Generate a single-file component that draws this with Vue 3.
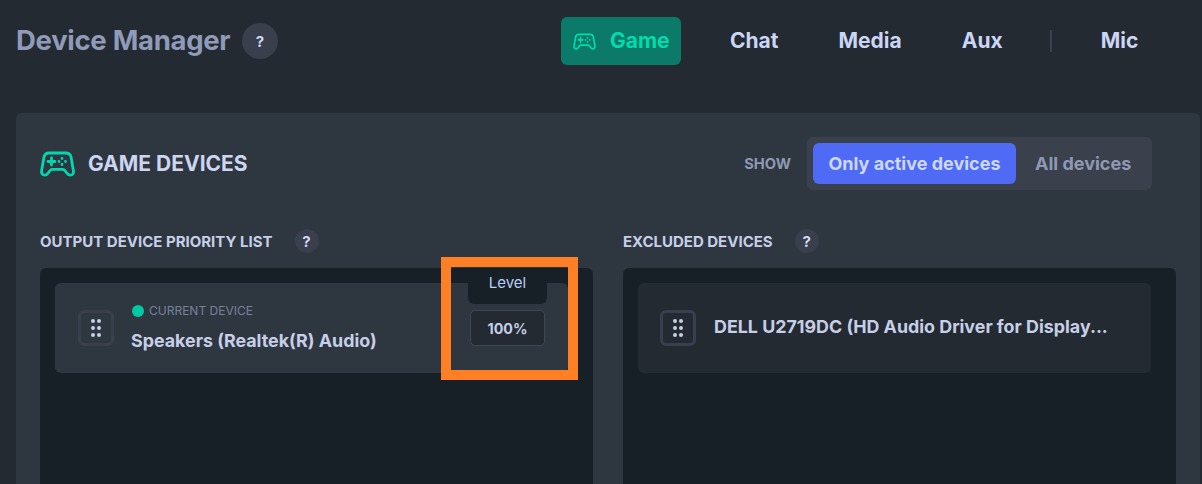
<script setup>
</script>

<template>
  <div class="page">
    <header class="top">
      <h1 class="title">Device Manager</h1>
      <span class="help big">?</span>
      <nav class="tabs">
        <div class="tab active">
          <svg class="pad small" viewBox="0 0 35 26" fill="none" stroke="currentColor" stroke-width="2.6" stroke-linecap="round" stroke-linejoin="round">
            <path d="M9 2h17c2.500 0 4.300 1.400 5 3.800l2.400 14c.4 2.600-1 4.400-3 4.400-1.500 0-2.500-.8-3.500-2.100l-2-2.600c-.6-.8-1.300-1.100-2.200-1.100h-10.400c-.9 0-1.600.3-2.200 1.100l-2 2.600c-1 1.300-2 2.100-3.500 2.100-2 0-3.400-1.800-3-4.400l2.400-14c.7-2.400 2.500-3.800 5-3.800z" />
            <path d="M8 10.500h7M11.500 7v7M22 7.500v.1M25.500 10.500v.1M19 10.500v.1M22 13.500v.1" />
          </svg>
          <span>Game</span>
        </div>
        <div class="tab chat">Chat</div>
        <div class="tab media">Media</div>
        <div class="tab aux">Aux</div>
        <i class="sep"></i>
        <div class="tab mic">Mic</div>
      </nav>
    </header>

    <section class="panel">
      <div class="panel-head">
        <svg class="pad" viewBox="0 0 35 26" fill="none" stroke="currentColor" stroke-width="2.8" stroke-linecap="round" stroke-linejoin="round">
          <path d="M9 2h17c2.500 0 4.300 1.400 5 3.800l2.400 14c.4 2.600-1 4.400-3 4.400-1.500 0-2.500-.8-3.500-2.100l-2-2.600c-.6-.8-1.300-1.100-2.200-1.100h-10.400c-.9 0-1.600.3-2.200 1.100l-2 2.600c-1 1.300-2 2.100-3.500 2.100-2 0-3.400-1.800-3-4.400l2.400-14c.7-2.400 2.500-3.800 5-3.800z" />
          <path d="M8 10.500h7M11.500 7v7M22 7.500v.1M25.500 10.500v.1M19 10.500v.1M22 13.500v.1" />
        </svg>
        <h2 class="panel-title">GAME DEVICES</h2>
        <span class="show">SHOW</span>
        <div class="segment">
          <span class="seg on">Only active devices</span>
          <span class="seg">All devices</span>
        </div>
      </div>

      <div class="cols">
        <div class="col">
          <div class="col-head"><span>OUTPUT DEVICE PRIORITY LIST</span><span class="help">?</span></div>
          <div class="list">
            <div class="card">
              <span class="grip"><svg viewBox="0 0 12 20" fill="currentColor"><circle cx="3" cy="3" r="2"/><circle cx="9" cy="3" r="2"/><circle cx="3" cy="10" r="2"/><circle cx="9" cy="10" r="2"/><circle cx="3" cy="17" r="2"/><circle cx="9" cy="17" r="2"/></svg></span>
              <div class="info">
                <div class="status"><i class="dot"></i>CURRENT DEVICE</div>
                <div class="name">Speakers (Realtek(R) Audio)</div>
              </div>
              <div class="level">
                <div class="level-tip">Level</div>
                <div class="level-val">100%</div>
              </div>
              <div class="highlight"></div>
            </div>
          </div>
        </div>
        <div class="col">
          <div class="col-head"><span>EXCLUDED DEVICES</span><span class="help">?</span></div>
          <div class="list">
            <div class="card dark">
              <span class="grip"><svg viewBox="0 0 12 20" fill="currentColor"><circle cx="3" cy="3" r="2"/><circle cx="9" cy="3" r="2"/><circle cx="3" cy="10" r="2"/><circle cx="9" cy="10" r="2"/><circle cx="3" cy="17" r="2"/><circle cx="9" cy="17" r="2"/></svg></span>
              <div class="name">DELL U2719DC (HD Audio Driver for Display...</div>
            </div>
          </div>
        </div>
      </div>
    </section>
  </div>
</template>

<style>
html, body { margin: 0; background: #232a31; overflow: hidden; }
</style>

<style scoped>
.page { width: 1202px; height: 484px; overflow: hidden; background: #232a31; font-family: Inter, "Noto Sans", sans-serif; }
.top { height: 113px; display: flex; align-items: flex-start; padding-left: 16px; box-sizing: border-box; }
.title { margin: 20px 0 0; width: 214px; white-space: nowrap; font-size: 27.5px; line-height: 40px; font-weight: 700; color: #8f9bb8; letter-spacing: -0.3px; }
.help { width: 24px; height: 24px; border-radius: 50%; background: #393f4c; color: #d3daf0; display: flex; align-items: center; justify-content: center; font-size: 15px; font-weight: 700; }
.help.big { width: 36px; height: 36px; margin: 23px 0 0 12px; font-size: 15px; }
.tabs { display: flex; align-items: center; margin: 17px 0 0 283px; height: 48px; }
.tab { font-size: 21px; font-weight: 700; color: #cbd6f5; line-height: 48px; }
.tab.active { width: 120px; height: 48px; box-sizing: border-box; padding-left: 12px; border-radius: 6px; background: #0b7a68; color: #00dcae; display: flex; align-items: center; gap: 14px; }
.chat { margin-left: 49px; }
.media { margin-left: 60px; }
.aux { margin-left: 60px; }
.sep { width: 2px; height: 22px; background: #3b424e; margin-left: 47px; }
.mic { margin-left: 49px; }
.pad { width: 35px; height: 26px; color: #00d8b0; flex: none; }
.pad.small { width: 23px; height: 17px; color: #00dcae; }
.panel { margin-left: 16px; width: 1184px; box-sizing: border-box; height: 400px; background: #2e3640; border-radius: 6px 6px 0 0; padding: 24px 24px 0 24px; }
.panel-head { display: flex; align-items: center; height: 53px; margin-right: 24px; }
.panel-title { margin: 0 0 0 13px; font-size: 21px; font-weight: 700; color: #cdd5f0; }
.show { margin-left: auto; font-size: 14.7px; font-weight: 700; color: #8f99b3; }
.segment { margin-left: 16px; width: 345px; height: 53px; box-sizing: border-box; padding: 6px; display: flex; align-items: center; background: #3a404c; border-radius: 6px; }
.seg { font-size: 18px; font-weight: 700; color: #8f99b3; padding-left: 19px; white-space: nowrap; }
.seg.on { width: 203px; height: 41px; box-sizing: border-box; padding: 0; display: flex; align-items: center; justify-content: center; border-radius: 6px; background: #4f6af5; color: #cdd8fb; }
.cols { display: flex; gap: 30px; margin-top: 39px; width: 1136px; }
.col { width: 553px; }
.col-head { display: flex; align-items: center; height: 24px; gap: 22px; font-size: 15px; font-weight: 700; color: #c7cfe8; }
.list { margin-top: 15px; height: 300px; background: #182027; border-radius: 6px 6px 0 0; padding: 15px 25px 15px 15px; box-sizing: border-box; }
.card { position: relative; height: 90px; box-sizing: border-box; background: #2e3640; border-radius: 6px; padding-left: 23px; display: flex; align-items: center; }
.card.dark { background: #232a31; padding-left: 22px; }
.grip { width: 36px; height: 36px; box-sizing: border-box; border: 3px solid #393f4c; border-radius: 6px; color: #c7cfe8; display: flex; align-items: center; justify-content: center; flex: none; }
.grip svg { width: 12px; height: 20px; }
.info { margin-left: 17px; }
.status { display: flex; align-items: center; gap: 5px; font-size: 12px; line-height: 16px; color: #79819a; margin-top: -3px; padding-left: 1px; }
.dot { width: 12px; height: 12px; border-radius: 50%; background: #00c9a3; }
.name { font-size: 17.85px; font-weight: 700; color: #c7cfe8; margin-top: 11px; white-space: nowrap; }
.card.dark .name { margin: -3px 0 0 18px; }
.level { position: absolute; left: 413px; top: -15px; width: 79px; display: flex; flex-direction: column; align-items: center; }
.level-tip { width: 79px; height: 36px; box-sizing: border-box; padding-top: 6px; background: #182027; border-radius: 0 0 6px 6px; color: #b9cdf6; font-size: 15px; line-height: 18px; text-align: center; }
.level-val { margin-top: 6px; width: 75px; height: 36px; box-sizing: border-box; border: 1px solid #3f4654; border-radius: 5px; background: #232a31; color: #c7cfe8; font-size: 14.3px; font-weight: 700; display: flex; align-items: center; justify-content: center; }
.highlight { position: absolute; left: 386px; top: -26px; width: 137px; height: 123px; box-sizing: border-box; border: 10px solid #ff7f24; pointer-events: none; }
</style>
